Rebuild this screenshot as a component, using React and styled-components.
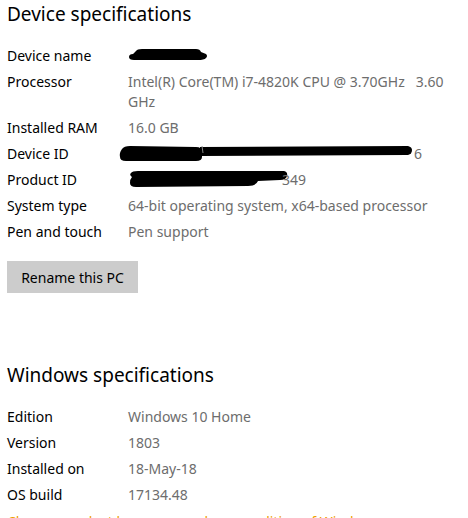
import React from 'react';
import styled, { createGlobalStyle } from 'styled-components';

const Global = createGlobalStyle`
  html, body { margin: 0; padding: 0; background: #ffffff; }
  body { font-family: "Segoe UI", "Noto Sans", "Open Sans", sans-serif; overflow: hidden; }
`;

const Page = styled.div`
  width: 468px;
  height: 518px;
  padding: 0 0 0 7px;
  box-sizing: border-box;
  overflow: hidden;
`;

const Heading = styled.h2`
  margin: ${p => p.$top || 0}px 0 0 0;
  font-size: 19px;
  font-weight: 400;
  line-height: 28px;
  color: #000;
`;

const SpecList = styled.div`
  display: grid;
  grid-template-columns: 121px 1fr;
  row-gap: 6px;
  margin-top: ${p => p.$top}px;
  font-size: 14px;
  line-height: 20px;
`;

const Label = styled.div`
  color: #000;
`;

const Value = styled.div`
  color: #6d6d6d;
  display: flex;
  align-items: center;
  white-space: nowrap;
`;

const Wrapped = styled.div`
  color: #6d6d6d;
  white-space: pre;
`;

const Button = styled.button`
  display: block;
  margin-top: 19px;
  width: 131px;
  height: 32px;
  border: none;
  background: #cccccc;
  font-family: inherit;
  font-size: 14px;
  color: #000;
  padding: 0;
`;

const Link = styled.div`
  margin-top: 7px;
  color: #eea000;
  font-size: 14px;
  line-height: 20px;
  white-space: nowrap;
`;

const Ink = styled.svg`
  display: block;
  flex: none;
`;

const specs = [
  ['Installed RAM', '16.0 GB'],
];

const lower = [
  ['System type', '64-bit operating system, x64-based processor'],
  ['Pen and touch', 'Pen support'],
];

const windows = [
  ['Edition', 'Windows 10 Home'],
  ['Version', '1803'],
  ['Installed on', '18-May-18'],
  ['OS build', '17134.48'],
];

export default function App() {
  return (
    <Page>
      <Global />
      <Heading>Device specifications</Heading>
      <SpecList $top={18}>
        <Label>Device name</Label>
        <Value>
          <Ink width="82" height="20" viewBox="0 0 82 20">
            <path d="M8 5 Q9 3 14 3 L68 3 Q72 3 73 6 L78 8 Q80 10 78 12 Q76 14 70 14 L6 14 Q1 14 1 11 Q1 8 5 8 Z" fill="#000" />
          </Ink>
        </Value>
        <Label>Processor</Label>
        <Wrapped>{'Intel(R) Core(TM) i7-4820K CPU @ 3.70GHz   3.60\nGHz'}</Wrapped>
        {specs.map(([k, v]) => (
          <React.Fragment key={k}>
            <Label>{k}</Label>
            <Value>{v}</Value>
          </React.Fragment>
        ))}
        <Label>Device ID</Label>
        <Value style={{ marginLeft: -10 }}>
          <Ink width="300" height="20" viewBox="0 0 300 20">
            <path d="M4 5 Q6 2 12 2 L78 3 Q84 3 84 8 L84 13 Q84 17 78 17 L8 17 Q2 17 2 13 Q1 9 4 5 Z" fill="#000" />
            <path d="M82 3 L290 2 Q294 3 294 6 Q294 10 290 11 L82 12 Z" fill="#000" />
            <path d="M84 2 L85 9" stroke="#888" strokeWidth="1" />
          </Ink>
          <span style={{ marginLeft: -4 }}>6</span>
        </Value>
        <Label>Product ID</Label>
        <Value>
          <Ink width="160" height="20" viewBox="0 0 160 20">
            <path d="M3 3 Q4 1 10 1 L156 1 Q160 2 159 6 Q158 10 152 10 L130 11 Q128 16 120 16 L8 17 Q2 17 2 13 Q2 9 4 7 Q1 5 3 3 Z" fill="#000" />
          </Ink>
          <span style={{ marginLeft: -6 }}>349</span>
        </Value>
        {lower.map(([k, v]) => (
          <React.Fragment key={k}>
            <Label>{k}</Label>
            <Value>{v}</Value>
          </React.Fragment>
        ))}
      </SpecList>
      <Button>Rename this PC</Button>
      <Heading $top={68}>Windows specifications</Heading>
      <SpecList $top={18}>
        {windows.map(([k, v]) => (
          <React.Fragment key={k}>
            <Label>{k}</Label>
            <Value>{v}</Value>
          </React.Fragment>
        ))}
      </SpecList>
      <Link>Change product key or upgrade your edition of Windows</Link>
    </Page>
  );
}
